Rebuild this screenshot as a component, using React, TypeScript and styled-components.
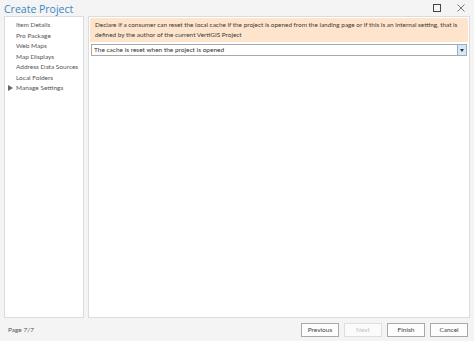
import styled, { createGlobalStyle } from "styled-components";

const GlobalStyle = createGlobalStyle`
  html, body {
    margin: 0;
    padding: 0;
    background: #f4f4f4;
  }
  body {
    font-family: "Lato", "Open Sans", "Liberation Sans", sans-serif;
  }
`;

const steps = [
  "Item Details",
  "Pro Package",
  "Web Maps",
  "Map Displays",
  "Address Data Sources",
  "Local Folders",
  "Manage Settings",
];

export default function App() {
  return (
    <>
      <GlobalStyle />
      <Window>
        <TitleBar>
          <Title>Create Project</Title>
          <WindowButtons>
            <svg width="8" height="8" viewBox="0 0 8 8">
              <rect x="0.5" y="0.5" width="7" height="7" fill="none" stroke="#444" strokeWidth="1" />
            </svg>
            <svg width="8" height="8" viewBox="0 0 8 8">
              <path d="M0.5 0.5 L7.5 7.5 M7.5 0.5 L0.5 7.5" stroke="#666" strokeWidth="0.9" />
            </svg>
          </WindowButtons>
        </TitleBar>
        <Body>
          <StepPanel>
            {steps.map((step, i) => (
              <StepItem key={step}>
                <Arrow $visible={i === steps.length - 1}>
                  <svg width="5" height="6" viewBox="0 0 5 6">
                    <path d="M0 0 L5 3 L0 6 Z" fill="#666" />
                  </svg>
                </Arrow>
                {step}
              </StepItem>
            ))}
          </StepPanel>
          <ContentPanel>
            <InfoBox>
              Declare if a consumer can reset the local cache if the project is opened from the
              landing page or if this is an internal setting, that is defined by the author of the
              current VertiGIS Project
            </InfoBox>
            <Select>
              <SelectValue>The cache is reset when the project is opened</SelectValue>
              <SelectButton>
                <svg width="4" height="3" viewBox="0 0 4 3">
                  <path d="M0 0 L4 0 L2 3 Z" fill="#333" />
                </svg>
              </SelectButton>
            </Select>
          </ContentPanel>
        </Body>
        <Footer>
          <PageLabel>Page 7/7</PageLabel>
          <Buttons>
            <Button>Previous</Button>
            <Button disabled>Next</Button>
            <Button>Finish</Button>
            <Button>Cancel</Button>
          </Buttons>
        </Footer>
      </Window>
    </>
  );
}

const Window = styled.div`
  width: 474px;
  height: 341px;
  display: flex;
  flex-direction: column;
  background: #f4f4f4;
  overflow: hidden;
`;

const TitleBar = styled.div`
  height: 16px;
  display: flex;
  align-items: center;
  justify-content: space-between;
  padding: 0 9px 0 4px;
`;

const Title = styled.div`
  font-family: "Open Sans", "Liberation Sans", sans-serif;
  font-size: 10.5px;
  color: #3a86c4;
  line-height: 16px;
  margin-top: 1px;
`;

const WindowButtons = styled.div`
  display: flex;
  align-items: center;
  gap: 16px;
`;

const Body = styled.div`
  height: 302px;
  display: flex;
  gap: 4px;
  padding: 0 4px;
`;

const Panel = styled.div`
  background: #ffffff;
  border: 1px solid #dcdcdc;
  box-sizing: border-box;
`;

const StepPanel = styled(Panel)`
  width: 80px;
  padding: 3px 0 0 3px;
  display: flex;
  flex-direction: column;
`;

const StepItem = styled.div`
  display: flex;
  align-items: center;
  gap: 3px;
  font-size: 6.5px;
  line-height: 10.5px;
  color: #555;
  white-space: nowrap;
`;

const Arrow = styled.span<{ $visible: boolean }>`
  width: 5px;
  display: flex;
  visibility: ${(p) => (p.$visible ? "visible" : "hidden")};
`;

const ContentPanel = styled(Panel)`
  flex: 1;
  padding: 1px;
  display: flex;
  flex-direction: column;
  gap: 2px;
`;

const InfoBox = styled.div`
  background: #fde4cb;
  color: #3a3a3a;
  font-size: 6.4px;
  line-height: 10px;
  padding: 2px 2px 2px 5px;
  height: 24px;
  box-sizing: border-box;
`;

const Select = styled.div`
  margin: 0 1px;
  height: 12px;
  display: flex;
  align-items: stretch;
  border: 1px solid #a9a9a9;
  box-sizing: border-box;
  background: #fff;
`;

const SelectValue = styled.div`
  flex: 1;
  font-size: 6.5px;
  line-height: 10px;
  color: #333;
  padding-left: 2px;
`;

const SelectButton = styled.div`
  width: 8px;
  display: flex;
  align-items: center;
  justify-content: center;
  background: #d5e8f8;
  border-left: 1px solid #7fb5e6;
`;

const Footer = styled.div`
  flex: 1;
  display: flex;
  align-items: center;
  justify-content: space-between;
  padding: 0 6px 0 8px;
`;

const PageLabel = styled.div`
  font-size: 6.5px;
  color: #555;
`;

const Buttons = styled.div`
  display: flex;
  gap: 5px;
`;

const Button = styled.button`
  width: 38px;
  height: 14px;
  padding: 0;
  font-family: inherit;
  font-size: 6.5px;
  color: #444;
  background: #fdfdfd;
  border: 1px solid #a8a8a8;
  &:disabled {
    color: #c4c4c4;
    border-color: #dedede;
    background: #fbfbfb;
  }
`;
